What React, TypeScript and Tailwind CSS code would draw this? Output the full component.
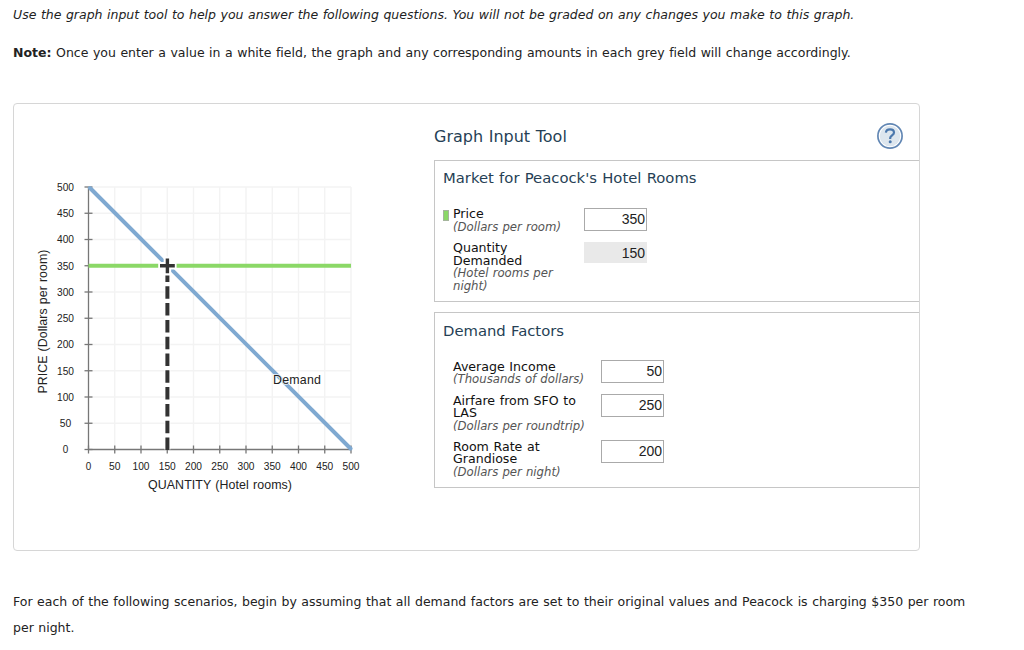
import type { ReactNode } from "react";

const TICKS = [0, 50, 100, 150, 200, 250, 300, 350, 400, 450, 500];
const X0 = 88.5;
const Y0 = 449.5;
const STEP = 26.25;
const X1 = X0 + STEP * 10;
const Y1 = Y0 - STEP * 10;

const px = (v: number) => X0 + (v / 50) * STEP;
const py = (v: number) => Y0 - (v / 50) * STEP;

function tickWidth(v: number) {
  return v === 0 ? 5.5 : v < 100 ? 11.5 : 17;
}

function DemandGraph() {
  return (
    <svg
      viewBox="14 104 420 446"
      className="h-[446px] w-[420px] shrink-0 font-['Liberation_Sans',sans-serif]"
    >
      {TICKS.slice(1).map((v) => (
        <g key={v} stroke="#f3f3f3" strokeWidth={1.4}>
          <line x1={px(v)} y1={Y1} x2={px(v)} y2={Y0} />
          <line x1={X0} y1={py(v)} x2={X1} y2={py(v)} />
        </g>
      ))}
      <g stroke="#777" strokeWidth={1.3}>
        <line x1={X0} y1={Y1} x2={X0} y2={Y0} />
        <line x1={X0} y1={Y0} x2={X1} y2={Y0} />
        {TICKS.map((v) => (
          <g key={v}>
            <line x1={px(v)} y1={Y0 - 4} x2={px(v)} y2={Y0 + 4} />
            <line x1={X0 - 4} y1={py(v)} x2={X0 + 4} y2={py(v)} />
          </g>
        ))}
      </g>
      <line x1={X0 + 1.5} y1={Y1 + 1} x2={X1 - 0.5} y2={Y0 - 1} stroke="#7fa9d1" strokeWidth={4} strokeLinecap="round" />
      <line x1={X0} y1={265.8} x2={X1} y2={265.8} stroke="#8bd867" strokeWidth={4} />
      <line x1={167.4} y1={449.5} x2={167.4} y2={274} stroke="#fff" strokeWidth={6} />
      <line x1={167.4} y1={450} x2={167.4} y2={275.5} stroke="#333" strokeWidth={4} strokeDasharray="12.5 4.3" />
      <path d="M158.2 265.8h18.4M167.4 256.6v18.4" stroke="#fff" strokeWidth={7.5} />
      <path d="M160 265.8h14.8M167.4 258.4v14.8" stroke="#333" strokeWidth={3.4} />
      <g fontSize={11} fill="#222" textAnchor="middle">
        {TICKS.map((v) => (
          <g key={v}>
            <text x={65.5} y={py(v) + 3.8} textLength={tickWidth(v)} lengthAdjust="spacingAndGlyphs">
              {v}
            </text>
            <text x={px(v)} y={470} textLength={tickWidth(v)} lengthAdjust="spacingAndGlyphs">
              {v}
            </text>
          </g>
        ))}
      </g>
      <g fontSize={12.4} fill="#222">
        <text x={273} y={384} textLength={48} stroke="#fff" strokeWidth={2} strokeOpacity={0.7} paintOrder="stroke">
          Demand
        </text>
        <text x={148} y={489} textLength={144}>
          QUANTITY (Hotel rooms)
        </text>
        <text transform="translate(46.5 393.5) rotate(-90)" textLength={144}>
          PRICE (Dollars per room)
        </text>
      </g>
    </svg>
  );
}

function Row({
  label,
  unit,
  value,
  className,
  labelClass,
  readOnly = false,
  swatch = false,
}: {
  label: ReactNode;
  unit: ReactNode;
  value: number;
  className: string;
  labelClass: string;
  readOnly?: boolean;
  swatch?: boolean;
}) {
  return (
    <div className={`flex items-start leading-[12.6px] ${className}`}>
      <div className="w-[10px] shrink-0 pt-[2px]">
        {swatch && <div className="h-[11px] w-[6px] border border-[#a5b59d] bg-[#8bd867]" />}
      </div>
      <div className={`shrink-0 whitespace-nowrap ${labelClass}`}>
        <div className="text-[12.6px] text-[#111] [word-spacing:0.6px]">{label}</div>
        <div className="text-[11.7px] italic text-[#555] [word-spacing:0.4px]">{unit}</div>
      </div>
      <input
        defaultValue={value}
        readOnly={readOnly}
        className={`block w-[63px] rounded-none text-right font-['Liberation_Sans',sans-serif] text-[14px] text-[#222] outline-none ${
          readOnly ? "h-[21px] bg-[#e9e9e9] pr-[2px]" : "h-[23px] border border-[#aaa] bg-white pr-px pb-[2px]"
        }`}
      />
    </div>
  );
}

export default function App() {
  return (
    <main className="h-[650px] w-[1024px] overflow-hidden bg-white pl-[13px] font-['DejaVu_Sans',Verdana,sans-serif] text-[12.5px] text-[#222] [font-variant-ligatures:none] [word-spacing:0.55px]">
      <p className="h-[38px] whitespace-nowrap pt-[5px] leading-[20px] italic">
        Use the graph input tool to help you answer the following questions. You will not be graded on any changes you
        make to this graph.
      </p>
      <p className="h-[65px] whitespace-nowrap pt-[5px] leading-[20px]">
        <b>Note:</b> Once you enter a value in a white field, the graph and any corresponding amounts in each grey field
        will change accordingly.
      </p>
      <section className="flex h-[448px] w-[907px] rounded-[4px] border border-[#d6d6d6]">
        <DemandGraph />
        <div className="flex flex-1 flex-col">
          <header className="flex h-[56px] items-center justify-between pr-[16px] pt-[9px]">
            <h1 className="text-[16px] text-[#263f55]">Graph Input Tool</h1>
            <button aria-label="Help" className="-mt-px">
              <svg viewBox="0 0 26 26" className="block size-[26px]">
                <circle cx="13" cy="13" r="12.1" fill="#fff" stroke="#6287b4" strokeWidth="1.7" />
                <circle cx="13" cy="13" r="10.3" fill="#dde6ee" />
                <path
                  d="M8.9 9.7c.2-2.2 1.9-3.4 4.1-3.4 2.4 0 4 1.3 4 3.2 0 2.7-3.8 3-3.8 5.6v.8"
                  fill="none"
                  stroke="#4b78ad"
                  strokeWidth="2.2"
                />
                <circle cx="13.2" cy="18.8" r="1.5" fill="#4b78ad" />
              </svg>
            </button>
          </header>
          <div className="h-[142px] border border-r-0 border-[#c6c6c6] pl-[8px]">
            <h2 className="h-[47px] pt-[7px] text-[14.8px] leading-[20px] text-[#263f55]">Market for Peacock's Hotel Rooms</h2>
            <Row
              swatch
              className="h-[34px]"
              labelClass="w-[131px]"
              label="Price"
              unit="(Dollars per room)"
              value={350}
            />
            <Row
              readOnly
              className=""
              labelClass="w-[131px]"
              label={<>Quantity<br />Demanded</>}
              unit={<>(Hotel rooms per<br />night)</>}
              value={150}
            />
          </div>
          <div className="mt-[10px] h-[176px] border border-r-0 border-[#c6c6c6] pl-[8px]">
            <h2 className="h-[47px] pt-[8px] text-[14.8px] leading-[20px] text-[#263f55]">Demand Factors</h2>
            <Row
              className="h-[34px]"
              labelClass="w-[148px] pt-[0.5px]"
              label="Average Income"
              unit="(Thousands of dollars)"
              value={50}
            />
            <Row
              className="h-[46px]"
              labelClass="w-[148px] pt-[0.5px]"
              label={<>Airfare from SFO to<br />LAS</>}
              unit="(Dollars per roundtrip)"
              value={250}
            />
            <Row
              className=""
              labelClass="w-[148px] pt-[0.5px]"
              label={<>Room Rate at<br />Grandiose</>}
              unit="(Dollars per night)"
              value={200}
            />
          </div>
        </div>
      </section>
      <p className="w-[985px] pt-[38px] leading-[26px]">
        <span className="whitespace-nowrap">
          For each of the following scenarios, begin by assuming that all demand factors are set to their original
          values and Peacock is charging $350 per room
        </span>
        <br />
        per night.
      </p>
    </main>
  );
}
